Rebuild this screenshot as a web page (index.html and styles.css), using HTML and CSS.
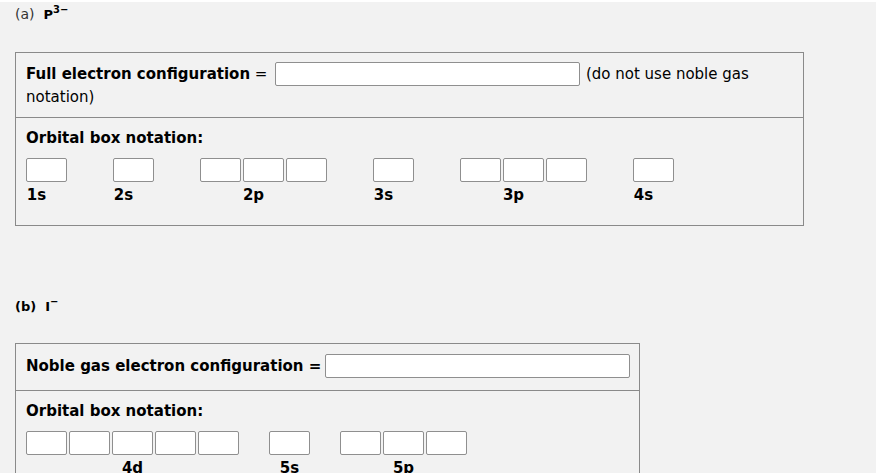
FILE: index.html
```html
<!DOCTYPE html>
<html>
<head>
<meta charset="utf-8">
<link rel="stylesheet" href="styles.css">
</head>
<body>
<div class="page">
  <div class="part-head part-a">(a)&nbsp; <b>P<sup>3−</sup></b></div>
  <div class="qbox qbox-a">
    <div class="row row-config">
      <b>Full electron configuration</b> = <span class="input input-a"></span> (do not use noble gas notation)
    </div>
    <div class="row row-orbitals">
      <div class="orb-title">Orbital box notation:</div>
      <div class="groups groups-a">
        <div class="group"><div class="boxes"><span class="box"></span></div><div class="label">1s</div></div>
        <div class="group"><div class="boxes"><span class="box"></span></div><div class="label">2s</div></div>
        <div class="group"><div class="boxes"><span class="box"></span><span class="box"></span><span class="box"></span></div><div class="label">2p</div></div>
        <div class="group"><div class="boxes"><span class="box"></span></div><div class="label">3s</div></div>
        <div class="group"><div class="boxes"><span class="box"></span><span class="box"></span><span class="box"></span></div><div class="label">3p</div></div>
        <div class="group"><div class="boxes"><span class="box"></span></div><div class="label">4s</div></div>
      </div>
    </div>
  </div>

  <div class="part-head part-b"><b>(b)&nbsp; I<sup>−</sup></b></div>
  <div class="qbox qbox-b">
    <div class="row row-config-b">
      <b>Noble gas electron configuration =</b> <span class="input input-b"></span>
    </div>
    <div class="row row-orbitals-b">
      <div class="orb-title">Orbital box notation:</div>
      <div class="groups groups-b">
        <div class="group"><div class="boxes"><span class="box"></span><span class="box"></span><span class="box"></span><span class="box"></span><span class="box"></span></div><div class="label">4d</div></div>
        <div class="group"><div class="boxes"><span class="box"></span></div><div class="label">5s</div></div>
        <div class="group"><div class="boxes"><span class="box"></span><span class="box"></span><span class="box"></span></div><div class="label">5p</div></div>
      </div>
    </div>
  </div>
</div>
</body>
</html>
```
FILE: styles.css
```css
html { background: #ffffff; }
body {
  margin: 0;
  font-family: "DejaVu Sans", Verdana, sans-serif;
  color: #000;
}
.page {
  margin-top: 2px;
  background: #f2f2f2;
  height: 471px;
  padding: 3px 0 0 15px;
  box-sizing: border-box;
  overflow: hidden;
}
.part-head {
  font-size: 13px;
  line-height: 18px;
  height: 18px;
}
.part-a {
  font-size: 14px;
  color: #333;
}
.part-a b {
  color: #000;
  font-size: 13px;
}
.part-head sup {
  font-size: 10px;
  vertical-align: 6px;
  line-height: 0;
}
.qbox {
  border: 1px solid #8a8a8a;
  background: #f2f2f2;
}
.qbox-a {
  width: 787px;
  margin-top: 29px;
}
.row {
  padding: 0 10px;
  font-size: 15px;
}
.row + .row { border-top: 1px solid #8a8a8a; }
.row-config {
  padding-top: 10px;
  padding-bottom: 8px;
  line-height: 23px;
}
.input {
  display: inline-block;
  background: #fff;
  border: 1px solid #8f8f8f;
  border-radius: 2px;
  box-sizing: border-box;
  height: 24px;
}
.input-a {
  width: 305px;
  margin-left: 3px;
  margin-right: 1px;
  vertical-align: middle;
  margin-top: -2px;
}
.orb-title {
  font-weight: bold;
  line-height: 18px;
}
.row-orbitals {
  padding-top: 11px;
  padding-bottom: 21px;
}
.groups {
  display: flex;
  margin-top: 11px;
}
.groups-a { gap: 46px; }
.groups-b { gap: 30px; }
.boxes {
  display: flex;
  gap: 2px;
}
.box {
  display: block;
  width: 41px;
  height: 24px;
  box-sizing: border-box;
  background: #fff;
  border: 1px solid #8f8f8f;
  border-radius: 2px;
}
.label {
  font-weight: bold;
  text-align: center;
  line-height: 18px;
  margin-top: 4px;
}
.groups-a .label { padding-right: 20px; }
.part-b {
  margin-top: 72px;
}
.qbox-b {
  width: 623px;
  margin-top: 27px;
}
.row-config-b {
  padding-top: 10px;
  padding-bottom: 12px;
  line-height: 24px;
  white-space: nowrap;
}
.input-b {
  width: 305px;
  margin-left: -1px;
  vertical-align: top;
}
.row-orbitals-b {
  padding-top: 11px;
  padding-bottom: 20px;
}
```
